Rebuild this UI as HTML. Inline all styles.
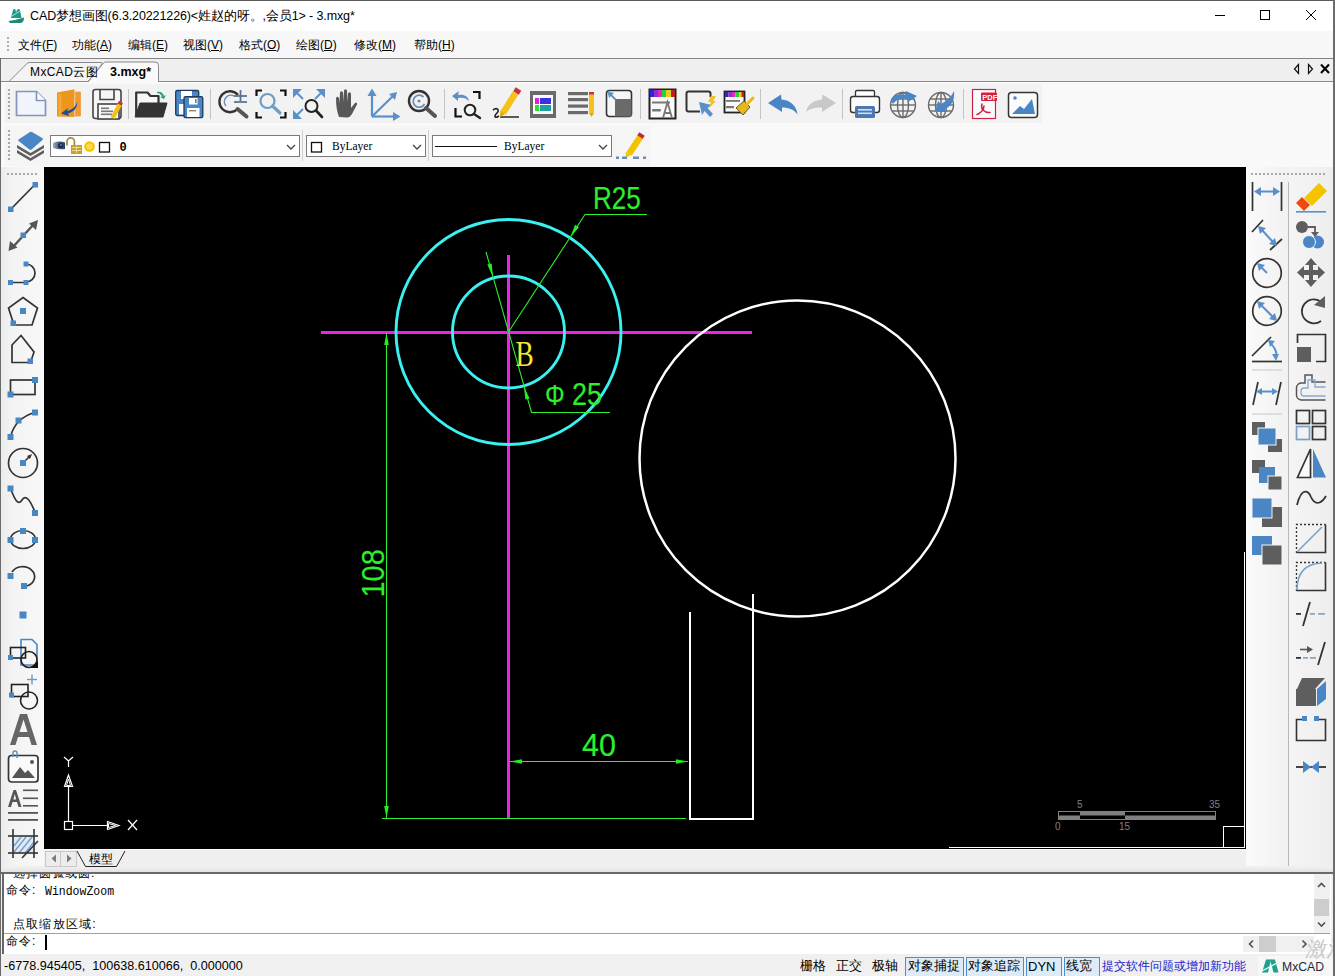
<!DOCTYPE html>
<html><head><meta charset="utf-8">
<style>
*{margin:0;padding:0;box-sizing:border-box}
html,body{width:1335px;height:976px;overflow:hidden;background:#f0f0f0;font-family:"Liberation Sans",sans-serif;color:#000}
.a{position:absolute}
.t{position:absolute;white-space:nowrap;line-height:1}
.menu{font-size:12px;top:39px}
.menu u{text-decoration:underline}
svg{position:absolute;overflow:visible}
</style></head><body>
<!-- title bar -->
<div class="a" style="left:0;top:0;width:1335px;height:31px;background:#fff;border-top:1px solid #5b5b5b"></div>
<div class="t" style="left:30px;top:10px;font-size:12.5px;letter-spacing:-0.11px;color:#000">CAD梦想画图(6.3.20221226)&lt;姓赵的呀。,会员1&gt; - 3.mxg*</div>
<!-- menu bar -->
<div class="a" style="left:0;top:31px;width:1335px;height:27px;background:#f7f7f7"></div>
<div class="t menu" style="left:18px">文件(<u>F</u>)</div>
<div class="t menu" style="left:72px">功能(<u>A</u>)</div>
<div class="t menu" style="left:128px">编辑(<u>E</u>)</div>
<div class="t menu" style="left:183px">视图(<u>V</u>)</div>
<div class="t menu" style="left:239px">格式(<u>O</u>)</div>
<div class="t menu" style="left:296px">绘图(<u>D</u>)</div>
<div class="t menu" style="left:354px">修改(<u>M</u>)</div>
<div class="t menu" style="left:414px">帮助(<u>H</u>)</div>
<!-- TOP -->
<svg class="a" style="left:0;top:0" width="1335" height="976" viewBox="0 0 1335 976">
<path d="M11,18 L13,10 Q14,8.5 15.5,9.5 L16,12 L17.5,9.5 Q19,8.5 20,10 L21.5,18 Z" fill="#1f9a86"/>
<line x1="12" y1="16" x2="20" y2="11" stroke="#8ff0e0" stroke-width="1"/>
<path d="M8.5,21 Q16,20 24,17.5 Q24,22 21,23 H10 Z" fill="#1f8a74"/>
<g stroke="#000" stroke-width="1" fill="none">
<line x1="1215" y1="15.5" x2="1225" y2="15.5"/>
<rect x="1260.5" y="10.5" width="9" height="9"/>
<line x1="1306" y1="10" x2="1316" y2="20"/><line x1="1316" y1="10" x2="1306" y2="20"/>
</g>
<g fill="#b0b0b0"><rect x="7" y="37" width="2" height="2"/><rect x="7" y="41" width="2" height="2"/><rect x="7" y="45" width="2" height="2"/><rect x="7" y="49" width="2" height="2"/></g>
</svg>
<!-- /TOP -->
<!-- tab bar -->
<div class="a" style="left:0;top:58px;width:1335px;height:24px;background:#efefef;border-top:1px solid #838383;border-bottom:1px solid #8a8a8a"></div>
<!-- TABS -->
<svg class="a" style="left:0;top:0" width="1335" height="976" viewBox="0 0 1335 976">
<path d="M9,81.5 L27,63.5 Q28,62.5 30,62.5 H101 Q103,62.5 102,64 L88,81.5 Z" fill="#f4f4f4" stroke="#8a8a8a" stroke-width="1"/>
<path d="M88,82 L103.5,63 Q104.5,62 106,62 H155 Q158.5,62 158.5,65.5 V82 Z" fill="#fafafa" stroke="#8a8a8a" stroke-width="1"/>
<rect x="89" y="81" width="69" height="2" fill="#fafafa"/>
<g fill="none" stroke="#111" stroke-width="1.2"><polygon points="1298.5,64.5 1294.5,69 1298.5,73.5"/><polygon points="1308.5,64.5 1312.5,69 1308.5,73.5"/></g>
<g stroke="#000" stroke-width="2"><line x1="1321" y1="64.5" x2="1329" y2="73"/><line x1="1329" y1="64.5" x2="1321" y2="73"/></g>
</svg>
<div class="t" style="left:30px;top:66px;font-size:12px;letter-spacing:0.4px">MxCAD云图</div>
<div class="t" style="left:110px;top:66px;font-size:12.5px;font-weight:bold">3.mxg*</div>
<!-- /TABS -->
<!-- toolbar area -->
<div class="a" style="left:1px;top:82px;width:1332px;height:85px;background:#f9f9f9"></div>
<div class="a" style="left:5px;top:84px;width:1037px;height:39px;background:#f2f2f2"></div>
<div class="a" style="left:5px;top:126px;width:646px;height:40px;background:#f5f5f5"></div>
<!-- ROW1 -->
<svg class="a" style="left:0;top:0" width="1335" height="976" viewBox="0 0 1335 976">
<!-- grip -->
<g fill="#a8a8a8"><rect x="8" y="89" width="2" height="2"/><rect x="8" y="93" width="2" height="2"/><rect x="8" y="97" width="2" height="2"/><rect x="8" y="101" width="2" height="2"/><rect x="8" y="105" width="2" height="2"/><rect x="8" y="109" width="2" height="2"/><rect x="8" y="113" width="2" height="2"/><rect x="8" y="117" width="2" height="2"/></g>
<!-- separators -->
<g fill="#c4c4c4"><rect x="128" y="89" width="1" height="30"/><rect x="210" y="89" width="1" height="30"/><rect x="444" y="89" width="1" height="30"/><rect x="640" y="89" width="1" height="30"/><rect x="760" y="89" width="1" height="30"/><rect x="842" y="89" width="1" height="30"/><rect x="963" y="89" width="1" height="30"/></g>
<!-- 1 new -->
<path d="M16.5,91.5 H36.5 L45.5,100.5 V115.5 H16.5 Z" fill="#f1f5fb" stroke="#8296bb" stroke-width="1.7"/>
<path d="M36.5,91.5 V100.5 H45.5" fill="#fff" stroke="#8296bb" stroke-width="1.7"/>
<!-- 2 open orange -->
<rect x="75.5" y="92" width="5" height="24" fill="#f29a30" stroke="#e8a040" stroke-width="0.8"/>
<polygon points="57,92.6 74.5,89.3 74.5,117 57,116.6" fill="#ec961e"/>
<rect x="58.5" y="94" width="3" height="22" fill="#f4a838"/>
<path d="M77,101 C77,106 72,110 67,111 L68,108 L61,113.5 L69,116 L68,113.5 C74,112 78,107 77,101 Z" fill="#1d4f9b"/>
<!-- 3 save -->
<rect x="93" y="89.5" width="28" height="29" rx="2.5" fill="#f6f6f6" stroke="#444" stroke-width="1.6"/>
<path d="M100,90 V99.5 H114 V90" fill="none" stroke="#444" stroke-width="1.6"/>
<rect x="98" y="104" width="21" height="15" fill="#f9f9f9" stroke="#444" stroke-width="1.6"/>
<g fill="#7a7a7a"><rect x="101" y="107.5" width="8" height="1.6"/><rect x="101" y="110.5" width="12" height="1.6"/><rect x="101" y="113.5" width="11" height="1.6"/></g>
<line x1="120" y1="104" x2="112.5" y2="118" stroke="#f2c21a" stroke-width="4.5"/>
<line x1="121" y1="102" x2="119.5" y2="104.5" stroke="#c8323c" stroke-width="4.5"/>
<!-- 4 folder -->
<path d="M136.2,116 V92.5 H147.5 L150.5,96 H158.5 V103" fill="#f7f7f7" stroke="#333" stroke-width="2.2" stroke-linejoin="round"/>
<polygon points="135,117 140,103 167,103 163,117" fill="#333" stroke="#333" stroke-width="1" stroke-linejoin="round"/>
<path d="M157,92 C161,91 163,93 164,96 L166,95 L164,99 L160,97 L162,96.5 C161,94 159,93 157,93 Z" fill="#2a9d8f"/>
<!-- 5 save as -->
<rect x="175.7" y="90.5" width="23" height="25" rx="1.5" fill="#4a86c5" stroke="#1e3a5a" stroke-width="1.3"/>
<rect x="181" y="91" width="11" height="8" fill="#fff"/>
<rect x="179" y="104" width="6" height="10.5" fill="#fff"/>
<rect x="184" y="96.7" width="18.8" height="21" rx="1.5" fill="#4a86c5" stroke="#1e3a5a" stroke-width="1.3"/>
<rect x="189" y="98" width="8.5" height="6.5" fill="#fff"/><rect x="195" y="99" width="1.5" height="4" fill="#777"/>
<rect x="187" y="108" width="12.5" height="9" fill="#fff"/>
<rect x="189" y="110" width="7" height="1.4" fill="#887"/>
<!-- 6 zoom realtime -->
<path d="M238,95 A10.5,10.5 0 1 0 237.5,109" fill="none" stroke="#333" stroke-width="2.4"/>
<path d="M234,96 A6.5,6.5 0 0 0 226,106" fill="none" stroke="#6a8fb8" stroke-width="1.6"/>
<line x1="237.5" y1="109" x2="246.5" y2="116.5" stroke="#555" stroke-width="4" stroke-linecap="round"/>
<g stroke="#5c7390" stroke-width="1.8"><line x1="234" y1="96" x2="247" y2="96"/><line x1="240.5" y1="90" x2="240.5" y2="101"/><line x1="234" y1="102" x2="247" y2="102"/></g>
<!-- 7 zoom window -->
<path d="M256.5,96 V90.5 H262 M280,90.5 H285.5 V96 M256.5,112 V117.5 H262 M280,117.5 H285.5 V112" fill="none" stroke="#111" stroke-width="2.2"/>
<circle cx="267.5" cy="101" r="7" fill="none" stroke="#6e9bc8" stroke-width="2.2"/>
<line x1="272.5" y1="106" x2="280" y2="113" stroke="#6e9bc8" stroke-width="3.2" stroke-linecap="round"/>
<!-- 8 zoom extents -->
<g fill="#5a90c8"><polygon points="293,89 302,89 293,98"/><polygon points="325,89 316,89 325,98"/><polygon points="293,119 302,119 293,110"/><polygon points="325,119 316,119 325,110" fill="none"/></g>
<g stroke="#5a90c8" stroke-width="2"><line x1="295" y1="91" x2="303" y2="99"/><line x1="323" y1="91" x2="315" y2="99"/><line x1="295" y1="117" x2="303" y2="109"/></g>
<circle cx="311.5" cy="106" r="6" fill="none" stroke="#222" stroke-width="2"/>
<line x1="316" y1="110.5" x2="322" y2="117" stroke="#222" stroke-width="2.6" stroke-linecap="round"/>
<!-- 9 hand -->
<path d="M339,117 C337,112 336,106 336,98 Q337.5,95.5 339,98 L339.5,103 L340,92.5 Q341.5,90 343,92.5 L343.5,102 L344,90.5 Q345.5,88 347,90.5 L347.5,102 L348,93.5 Q349.5,91 351,93.5 L351,108 L355,103 Q357.5,101.5 357,104.5 L352.5,113 C351,116 349,117.5 347,117.5 Z" fill="#585858"/>
<!-- 10 ucs -->
<g stroke="#5a90c8" stroke-width="2.2" fill="none"><line x1="372" y1="116.5" x2="372" y2="94"/><line x1="372" y1="116.5" x2="395" y2="116.5"/><line x1="372" y1="116.5" x2="393" y2="96"/></g>
<g fill="#5a90c8"><polygon points="372,88.5 367.5,96 376.5,96"/><polygon points="400.5,116.5 393,112 393,121"/><polygon points="397,92 389,94 395,100"/></g>
<!-- 11 zoom previous -->
<circle cx="419" cy="101" r="10" fill="none" stroke="#333" stroke-width="2.4"/>
<path d="M423.5,97 A6,6 0 1 0 424.5,104" fill="none" stroke="#6a8fb8" stroke-width="1.8"/>
<circle cx="419" cy="101" r="1.6" fill="#6a8fb8"/>
<line x1="426" y1="108" x2="435" y2="116" stroke="#555" stroke-width="4" stroke-linecap="round"/>
<!-- 12 zoom back -->
<path d="M469,101 C468,96 464,94 458,95 L459,91 L452,96 L458,101 L458,98 C463,97 466,98 469,101 Z" fill="#5a90c8"/>
<path d="M473,92 H479.5 V99 M455.5,108 V116.5 H462" fill="none" stroke="#111" stroke-width="2.2"/>
<circle cx="470" cy="110" r="5.3" fill="none" stroke="#222" stroke-width="2"/>
<line x1="474" y1="114" x2="480" y2="118" stroke="#222" stroke-width="2.4" stroke-linecap="round"/>
<!-- 13 pencil -->
<path d="M493,110 C497,107 500,110 497,113 C494,116 494,119 499,116" fill="none" stroke="#222" stroke-width="1.6"/>
<line x1="500" y1="117" x2="519" y2="117" stroke="#333" stroke-width="1.6"/>
<line x1="515.5" y1="93" x2="503" y2="113" stroke="#f4c21a" stroke-width="6.5"/>
<polygon points="500,117 500.5,111 505,114" fill="#e6a800"/>
<line x1="518.5" y1="89" x2="516" y2="93" stroke="#c8323c" stroke-width="6.5"/>
<!-- 14 layer table -->
<rect x="530" y="91" width="26" height="27" fill="#6a6a6a"/>
<rect x="533" y="95" width="20" height="19" fill="#fafafa"/>
<rect x="535" y="98" width="4" height="6" fill="#e020e0"/><rect x="540" y="98" width="11" height="6" fill="#3a30e0"/>
<rect x="535" y="105" width="4" height="6" fill="#30e030"/><rect x="540" y="105" width="11" height="6" fill="#20a0a0"/>
<!-- 15 lines pencil -->
<g fill="#6a6a6a"><rect x="568" y="92" width="20" height="3.2"/><rect x="568" y="98" width="20" height="3.2"/><rect x="568" y="104.5" width="20" height="3.2"/><rect x="568" y="111" width="20" height="3.2"/></g>
<rect x="589" y="94" width="5" height="19" fill="#f4c21a"/><rect x="589" y="92" width="5" height="2.5" fill="#c8323c"/><polygon points="589,113 594,113 591.5,117" fill="#e6a800"/>
<!-- 16 matchprop -->
<rect x="606.5" y="90.5" width="25" height="26" rx="3" fill="#f7f7f7" stroke="#333" stroke-width="1.6"/>
<rect x="615" y="99" width="16.5" height="17.5" fill="#6a6a6a"/>
<line x1="616" y1="100" x2="610" y2="94" stroke="#5a90c8" stroke-width="1.8"/>
<polygon points="607.5,91.5 614,93 609,98" fill="#5a90c8"/>
<!-- 17 text style -->
<rect x="649.5" y="89.5" width="26" height="29" fill="#fafafa" stroke="#222" stroke-width="2"/>
<g><rect x="650" y="90" width="4" height="7" fill="#2a2ad0"/><rect x="654" y="90" width="4" height="7" fill="#9a2ad0"/><rect x="658" y="90" width="4" height="7" fill="#e02ac0"/><rect x="662" y="90" width="4" height="7" fill="#30d030"/><rect x="666" y="90" width="5" height="7" fill="#e0d020"/><rect x="671" y="90" width="4" height="7" fill="#c02020"/></g>
<rect x="652" y="101.5" width="18" height="2" fill="#777"/>
<rect x="652" y="109" width="9" height="2.5" fill="#777" rx="1"/>
<path d="M663,118 L667.5,102 L672,118 M665,113 H670" fill="none" stroke="#777" stroke-width="1.8"/>
<!-- 18 select -->
<path d="M700,111.5 H688.5 A2,2 0 0 1 686.5,109.5 V93.5 A2,2 0 0 1 688.5,91.5 H708.5 A2,2 0 0 1 710.5,93.5 V97" fill="none" stroke="#333" stroke-width="2"/>
<polygon points="699,102 712,105 707.5,108 713,114 710,117 704.5,111 702,115" fill="#5a90c8"/>
<polygon points="711,96 716,96 713,101 716,101 709,108 711,102 708,102" fill="#f2c21a"/>
<!-- 19 brush style -->
<rect x="724.5" y="91.5" width="20" height="21" fill="#fafafa" stroke="#222" stroke-width="1.8"/>
<g><rect x="725" y="92" width="3.5" height="5" fill="#2a2ad0"/><rect x="728.5" y="92" width="3.5" height="5" fill="#9a2ad0"/><rect x="732" y="92" width="3.5" height="5" fill="#e02ac0"/><rect x="735.5" y="92" width="3.5" height="5" fill="#30d030"/><rect x="739" y="92" width="2.5" height="5" fill="#e0d020"/><rect x="741.5" y="92" width="2.5" height="5" fill="#c02020"/></g>
<rect x="726" y="100" width="14" height="1.8" fill="#777"/><rect x="726" y="106" width="8" height="2.2" fill="#777"/>
<path d="M736,108 L744,101 L750,107 L743,115 Z" fill="#e8b81a" stroke="#6a5a20" stroke-width="1"/>
<line x1="747" y1="104" x2="753" y2="98" stroke="#e8b81a" stroke-width="3" stroke-linecap="round"/>
<!-- 20 undo -->
<path d="M768,103 L781,94.5 L781.5,99.5 C790,100 797,106 797.5,114.5 C794,109.5 789,107.5 782,107.5 L782,112 Z" fill="#4a86c5"/>
<!-- 21 redo -->
<path d="M836,103 L822.5,94.5 L822,99.5 C814,100 807,105 806,112 C810,108.5 815,107.5 822,107.5 L822,112 Z" fill="#c8c8c8"/>
<!-- 22 printer -->
<rect x="855.5" y="90.5" width="19" height="7" rx="1.5" fill="#fff" stroke="#333" stroke-width="1.3"/>
<rect x="850.5" y="96.5" width="29" height="16" rx="2.5" fill="#fbfbfb" stroke="#333" stroke-width="1.4"/>
<rect x="855" y="106" width="20" height="12" rx="1.5" fill="#4a78b0"/>
<rect x="858" y="109" width="14" height="1.6" fill="#cfe0f5"/><rect x="858" y="112.5" width="14" height="1.6" fill="#cfe0f5"/>
<!-- 23 globe1 -->
<g fill="none" stroke="#6a6a6a" stroke-width="1.4"><circle cx="903" cy="105" r="12.5"/><ellipse cx="903" cy="105" rx="5.5" ry="12.5"/><line x1="890.5" y1="105" x2="915.5" y2="105"/><line x1="892" y1="99" x2="914" y2="99"/><line x1="892" y1="111" x2="914" y2="111"/><line x1="903" y1="92.5" x2="903" y2="117.5"/></g>
<path d="M891,101 C893,95 899,93 905,95 L906,91 L917,96 L908,102 L907,99 C902,98 896,99 893,104 Z" fill="#4a86c5"/>
<!-- 24 globe2 -->
<g fill="none" stroke="#6a6a6a" stroke-width="1.4"><circle cx="941" cy="105" r="12.5"/><ellipse cx="941" cy="105" rx="5.5" ry="12.5"/><line x1="928.5" y1="105" x2="953.5" y2="105"/><line x1="930" y1="99" x2="952" y2="99"/><line x1="930" y1="111" x2="952" y2="111"/><line x1="941" y1="92.5" x2="941" y2="117.5"/></g>
<path d="M954,91 C955,99 952,106 945,109 L947,112 L935,112 L938,101 L941,104 C947,101 951,97 954,91 Z" fill="#4a86c5"/>
<!-- 25 pdf -->
<rect x="972.5" y="89.5" width="23" height="29" fill="#fbfbfb" stroke="#cc2244" stroke-width="1.2"/>
<rect x="981" y="92.5" width="16" height="8.5" rx="1" fill="#d4203e"/>
<text x="982.3" y="100" font-family="Liberation Sans" font-size="7.5" font-weight="bold" fill="#fff">PDF</text>
<path d="M982,104 C981,107 982,109 983,110 C981,112 979,114 977,114.5 M983,110 C985,112 987,113 990,112.5 M983,110 L984,106" fill="none" stroke="#cc2244" stroke-width="1.5" stroke-linecap="round"/>
<!-- 26 image -->
<rect x="1008.5" y="92.5" width="29" height="25" rx="3" fill="#fbfbfb" stroke="#333" stroke-width="1.5"/>
<circle cx="1015" cy="98" r="1.8" fill="#4a86c5"/>
<polygon points="1012,114 1020,106 1024,109 1032,99 1035,114" fill="#4a86c5"/>
</svg>
<!-- /ROW1 -->
<!-- ROW2 -->
<svg class="a" style="left:0;top:0" width="1335" height="976" viewBox="0 0 1335 976">
<g fill="#a8a8a8"><rect x="8" y="130" width="2" height="2"/><rect x="8" y="134" width="2" height="2"/><rect x="8" y="138" width="2" height="2"/><rect x="8" y="142" width="2" height="2"/><rect x="8" y="146" width="2" height="2"/><rect x="8" y="150" width="2" height="2"/><rect x="8" y="154" width="2" height="2"/><rect x="8" y="158" width="2" height="2"/></g>
<!-- layers icon -->
<path d="M17,150 L30.5,158 L44,150 L44,153 L30.5,161 L17,153 Z" fill="#5e5e5e"/>
<path d="M17,145 L30.5,153 L44,145 L44,148 L30.5,156 L17,148 Z" fill="#5e5e5e"/>
<path d="M18,141 Q17,140 18.5,139 L30,131.5 Q31,131 32,131.5 L43,138 Q44,139 43,140 L31.5,150 Q30.5,150.5 29.5,150 Z" fill="#4a86c5" stroke="#f3f3f3" stroke-width="1"/>
<!-- combo boxes -->
<rect x="50.5" y="135.5" width="249" height="21" fill="#fff" stroke="#7a7a7a" stroke-width="1"/>
<rect x="306.5" y="135.5" width="119" height="21" fill="#fff" stroke="#7a7a7a" stroke-width="1"/>
<rect x="432.5" y="135.5" width="179" height="21" fill="#fff" stroke="#7a7a7a" stroke-width="1"/>
<g fill="#d0d0d0"><rect x="302" y="130" width="1" height="31"/><rect x="428" y="130" width="1" height="31"/></g>
<g fill="none" stroke="#444" stroke-width="1.3"><polyline points="287,145 291,149 295,145"/><polyline points="413,145 417,149 421,145"/><polyline points="599,145 603,149 607,145"/></g>
<!-- eye -->
<defs><linearGradient id="eyeg" x1="0" x2="1"><stop offset="0" stop-color="#9aaabb"/><stop offset="0.5" stop-color="#4a6282"/><stop offset="1" stop-color="#2a4262"/></linearGradient></defs><path d="M53,143 Q59,140.5 65,142.5 V149 Q59,150 53,148 Z" fill="url(#eyeg)"/><circle cx="60.5" cy="145.5" r="2.6" fill="#1a2e4a"/><circle cx="61" cy="145" r="0.7" fill="#c8d4e0"/>
<!-- lock -->
<path d="M67,145.5 V141.5 A3.7,3.7 0 0 1 74.4,141.5 V146" fill="none" stroke="#a89040" stroke-width="1.8"/>
<rect x="71" y="145" width="11" height="9" fill="#c8a030"/>
<g fill="#f0d890"><rect x="72" y="147" width="9" height="1"/><rect x="72" y="150" width="9" height="1"/><rect x="76" y="146" width="1" height="7"/></g>
<!-- sun -->
<circle cx="89.5" cy="146.5" r="5.3" fill="#f5c000"/><circle cx="89.5" cy="146.5" r="3.2" fill="#ffd84a"/>
<!-- squares -->
<rect x="99.5" y="142.5" width="10" height="9.5" fill="none" stroke="#111" stroke-width="1.3"/>
<rect x="311.5" y="142.5" width="10" height="9.5" fill="none" stroke="#111" stroke-width="1.3"/>
<line x1="435" y1="146.5" x2="497" y2="146.5" stroke="#111" stroke-width="1"/>
<!-- pencil -->
<line x1="640.5" y1="136.5" x2="629" y2="154" stroke="#f2c400" stroke-width="6.5"/>
<line x1="642" y1="134" x2="640" y2="137" stroke="#c02838" stroke-width="6.5"/>
<polygon points="626,157.5 625.5,152 631,155" fill="#f2c400"/>
<g fill="#6a8cb8"><rect x="616" y="156.5" width="3" height="2.5"/><rect x="622" y="156.5" width="5" height="2.5"/><rect x="633" y="156.5" width="6" height="2.5"/><rect x="643" y="156.5" width="3" height="2.5"/></g>
</svg>
<div class="t" style="left:119.5px;top:141.5px;font-family:'Liberation Mono',monospace;font-size:12px;font-weight:bold">0</div>
<div class="t" style="left:332px;top:141px;font-family:'Liberation Serif',serif;font-size:11.5px">ByLayer</div>
<div class="t" style="left:504px;top:141px;font-family:'Liberation Serif',serif;font-size:11.5px">ByLayer</div>
<!-- /ROW2 -->
<!-- drawing area -->
<div class="a" style="left:44px;top:167px;width:1202px;height:682px;background:#000"></div>
<!-- drawing -->
<svg class="a" style="left:0;top:0" width="1335" height="976" viewBox="0 0 1335 976">
<g fill="none">
<line x1="321" y1="332.5" x2="752" y2="332.5" stroke="#ea22ea" stroke-width="3"/>
<line x1="508.5" y1="255" x2="508.5" y2="819" stroke="#ea22ea" stroke-width="3"/>
<circle cx="508.5" cy="332" r="112.5" stroke="#3af0f0" stroke-width="2.9"/>
<circle cx="508.5" cy="332" r="56" stroke="#3af0f0" stroke-width="2.9"/>
<circle cx="797.5" cy="458.5" r="158" stroke="#fff" stroke-width="2.5"/>
<polyline points="690,612 690,819 753,819 753,594" stroke="#fff" stroke-width="2"/>
<g stroke="#2cf02c" stroke-width="1.1">
<polyline points="508.5,332 585,214.5 647,214.5"/>
<polyline points="486,252 531.5,412.5 610,412.5"/>
<line x1="386.5" y1="333" x2="386.5" y2="818.5"/>
<line x1="382" y1="818.5" x2="686" y2="818.5"/>
<line x1="510" y1="761.5" x2="688" y2="761.5"/>
</g>
</g>
<polygon points="570.5,237.0 575.0,224.8 579.0,227.2" fill="#22ee22"/><polygon points="493.0,277.0 487.3,264.6 491.7,263.4" fill="#22ee22"/><polygon points="524.0,387.0 529.7,398.4 525.3,399.6" fill="#22ee22"/><polygon points="510.0,761.5 522.0,759.2 522.0,763.8" fill="#22ee22"/><polygon points="688.0,761.5 676.0,763.8 676.0,759.2" fill="#22ee22"/><polygon points="386.5,333.0 388.8,345.0 384.2,345.0" fill="#22ee22"/><polygon points="386.5,818.0 384.2,806.0 388.8,806.0" fill="#22ee22"/>
<g fill="#2cf02c" font-family="Liberation Sans" >
<text x="593" y="208.6" font-size="31" transform="translate(593 0) scale(0.84 1) translate(-593 0)" stroke="#2cf02c" stroke-width="0.15">R25</text>
<text x="545" y="405.5" font-size="30" transform="translate(545 0) scale(0.82 1) translate(-545 0)" stroke="#2cf02c" stroke-width="0.15">&#934;</text>
<text x="572" y="405.5" font-size="30.5" transform="translate(572 0) scale(0.88 1) translate(-572 0)" stroke="#2cf02c" stroke-width="0.15">25</text>
<text x="582" y="755.5" font-size="30.5" stroke="#2cf02c" stroke-width="0.15">40</text>
<text x="0" y="0" font-size="31.5" transform="translate(383.5 597.5) rotate(-90) scale(0.92 1)" stroke="#2cf02c" stroke-width="0.15">108</text>
</g>
<text x="515.5" y="365.7" font-size="35" fill="#f0e830" font-family="Liberation Serif" transform="translate(515.5 0) scale(0.78 1) translate(-515.5 0)">B</text>
<!-- ucs -->
<g stroke="#fff" stroke-width="1.2" fill="none">
<rect x="64.5" y="821.5" width="8" height="8"/>
<line x1="68.5" y1="821.5" x2="68.5" y2="786.5"/>
<line x1="72.5" y1="825.5" x2="107.5" y2="825.5"/>
<polygon points="68.5,775 64.5,786.5 72.5,786.5"/>
<polygon points="119,825.5 107.5,821.5 107.5,829.5"/>
<polygon points="68.5,779 66.5,785.5 70.5,785.5" stroke-width="1"/><polygon points="115.5,825.5 108.5,823.5 108.5,827.5" stroke-width="1"/>
<polyline points="64,757 68.5,761 73,757"/><line x1="68.5" y1="761" x2="68.5" y2="767"/>
<line x1="128" y1="820" x2="137" y2="830"/><line x1="137" y1="820" x2="128" y2="830"/>
</g>
<!-- scale bar -->
<g>
<rect x="1058.5" y="811.5" width="157" height="8" fill="none" stroke="#808080" stroke-width="1"/>
<rect x="1058" y="815.5" width="22" height="4.5" fill="#808080"/>
<rect x="1080" y="811.5" width="45" height="4" fill="#808080"/>
<rect x="1125" y="815.5" width="91" height="4.5" fill="#808080"/>
<g fill="#808080" font-family="Liberation Sans" font-size="10">
<text x="1077" y="808">5</text><text x="1209" y="808">35</text>
<text x="1055" y="830">0</text><text x="1119" y="830">15</text>
</g>
<polyline points="949,847.5 1244.5,847.5 1244.5,552" fill="none" stroke="#fff" stroke-width="1"/>
<rect x="1223.5" y="826.5" width="21" height="21" fill="none" stroke="#fff" stroke-width="1"/>
</g>
</svg>
<!-- left toolbar -->
<div class="a" style="left:1px;top:167px;width:43px;height:701px;background:linear-gradient(to right,#ececec 0,#f3f3f3 25%,#f8f8f8 100%)"></div>
<!-- right toolbar -->
<div class="a" style="left:1246px;top:167px;width:87px;height:701px;background:linear-gradient(to right,#fafafa 0,#f1f1f1 49%,#f4f4f4 50%,#eeeeee 100%)"></div>
<!-- LEFT -->
<svg class="a" style="left:0;top:0" width="1335" height="976" viewBox="0 0 1335 976">
<g fill="#a8a8a8"><rect x="7" y="173" width="2" height="2"/><rect x="11" y="173" width="2" height="2"/><rect x="15" y="173" width="2" height="2"/><rect x="19" y="173" width="2" height="2"/><rect x="23" y="173" width="2" height="2"/><rect x="27" y="173" width="2" height="2"/><rect x="31" y="173" width="2" height="2"/><rect x="35" y="173" width="2" height="2"/></g>
<g fill="none" stroke="#333" stroke-width="1.7">
<line x1="11" y1="209" x2="35" y2="184.5"/>
<path d="M10.5,282.5 H26 M26,264 A9,9 0 0 1 26,282"/>
<polygon points="23,297.5 37.5,308 32,325 14,325 8.5,308"/>
<polygon points="21,335.5 34,352 30.5,362.5 12,362.5 12,345"/>
<rect x="10.5" y="380" width="24.5" height="14.5"/>
<path d="M10.5,437 Q15,418 35,412.5"/>
<circle cx="23" cy="463" r="14.5"/>
<path d="M10.5,488.5 C15,500 18,506 22,500 C26,494 30,500 35,512"/>
<ellipse cx="23" cy="539.5" rx="12.5" ry="9"/>
<path d="M12,572 A12,10 0 1 1 27,586"/>
</g>
<g stroke="#555" stroke-width="2.4" fill="none"><line x1="12" y1="248" x2="34" y2="224"/></g>
<g fill="#555"><polygon points="8.5,251 10,241 17.5,247.5"/><polygon points="38,220 36,230 29,223.5"/></g>
<line x1="23" y1="463" x2="30" y2="456" stroke="#333" stroke-width="1.6"/><polygon points="32,454 27,456 30,459" fill="#333"/>
<g fill="#4a86c5">
<rect x="8" y="206.5" width="5.5" height="5.5"/><rect x="32.5" y="182" width="5.5" height="5.5"/>
<rect x="20.5" y="232.5" width="5.5" height="5.5"/>
<rect x="8" y="280" width="5" height="5"/><rect x="23.5" y="280" width="5" height="5"/><rect x="23.5" y="261.5" width="5" height="5"/>
<rect x="20" y="308" width="6" height="6"/><rect x="10.5" y="320.5" width="5.5" height="5.5"/>
<rect x="27.5" y="358.5" width="5.5" height="5.5"/>
<rect x="32" y="377" width="6" height="6"/><rect x="7.5" y="391.5" width="6" height="6"/>
<rect x="7.5" y="434" width="6" height="6"/><rect x="15.5" y="417.5" width="6" height="6"/><rect x="32" y="409.5" width="6" height="6"/>
<rect x="20" y="460" width="6" height="6"/>
<rect x="7.5" y="485.5" width="6" height="6"/><rect x="32" y="510" width="6" height="6"/>
<rect x="7.5" y="537" width="6" height="6"/><rect x="20" y="528" width="6" height="6"/><rect x="32" y="537" width="6" height="6"/>
<rect x="7.5" y="573" width="6" height="6"/><rect x="21" y="583" width="6" height="6"/>
<rect x="19.5" y="611.5" width="7" height="7"/>
</g>
<!-- block insert -->
<path d="M21,639.5 H32 L37,644.5 V665 H21 Z" fill="#f6f6f6" stroke="#4a86c5" stroke-width="1.6"/>
<g fill="none" stroke="#222" stroke-width="1.6"><rect x="10.5" y="647.5" width="15" height="10.5"/><circle cx="29" cy="659.5" r="8"/></g>
<polygon points="38,661 38,668 31,668" fill="#111"/>
<rect x="8" y="655" width="5" height="5" fill="#4a86c5"/>
<!-- make block -->
<g fill="none" stroke="#222" stroke-width="1.6"><rect x="11.5" y="684.5" width="16.5" height="12"/><circle cx="29" cy="700.5" r="8.5"/></g>
<rect x="9" y="692.5" width="5" height="5" fill="#4a86c5"/>
<g stroke="#6a9ac8" stroke-width="1.4"><line x1="27" y1="679.5" x2="37" y2="679.5"/><line x1="32" y1="674.5" x2="32" y2="684.5"/></g>
<!-- text A -->
<path d="M10,745 L20,714 H27 L37,745 H31.5 L29,737 H18 L15.5,745 Z M19.5,732 H27.5 L23.5,719.5 Z" fill="#666" fill-rule="evenodd"/>
<!-- image -->
<rect x="8.5" y="755.5" width="29.5" height="26.5" rx="3" fill="#fafafa" stroke="#333" stroke-width="1.7"/>
<path d="M13,757 V753 A2,2 0 0 1 17,753 V758" fill="none" stroke="#5a90c8" stroke-width="1.4"/>
<circle cx="32" cy="762" r="2" fill="#555"/>
<polygon points="12,778 20,767 25,773 28,770 35,778" fill="#555"/>
<!-- mtext -->
<path d="M8,807 L13.5,790 H16 L21.5,807 H18.5 L17,802 H12.5 L11,807 Z M13.3,799.5 H16.2 L14.8,794 Z" fill="#555" fill-rule="evenodd"/>
<g fill="#555"><rect x="23" y="789.5" width="15" height="1.6"/><rect x="23" y="797.5" width="15" height="1.6"/><rect x="23" y="805" width="15" height="1.6"/><rect x="8" y="812" width="30" height="1.8"/><rect x="8" y="819" width="30" height="1.8"/></g>
<!-- hatch -->
<rect x="13" y="836" width="21" height="17" fill="#dfeaf5"/>
<g stroke="#7aa0c8" stroke-width="1.5"><line x1="14" y1="846" x2="21" y2="837"/><line x1="14" y1="852" x2="26" y2="837"/><line x1="19" y1="853" x2="32" y2="837"/><line x1="25" y1="853" x2="34" y2="842"/></g>
<g stroke="#333" stroke-width="1.6"><line x1="8" y1="836" x2="38" y2="836"/><line x1="8" y1="853" x2="38" y2="853"/><line x1="13" y1="829" x2="13" y2="858"/><line x1="34" y1="829" x2="34" y2="858"/><line x1="22" y1="858" x2="38" y2="841"/></g>
</svg>
<!-- /LEFT -->
<!-- RIGHT -->
<svg class="a" style="left:0;top:0" width="1335" height="976" viewBox="0 0 1335 976">
<g fill="#a8a8a8"><rect x="1251" y="173" width="2" height="2"/><rect x="1255" y="173" width="2" height="2"/><rect x="1259" y="173" width="2" height="2"/><rect x="1263" y="173" width="2" height="2"/><rect x="1267" y="173" width="2" height="2"/><rect x="1271" y="173" width="2" height="2"/><rect x="1275" y="173" width="2" height="2"/><rect x="1279" y="173" width="2" height="2"/><rect x="1283" y="173" width="2" height="2"/><rect x="1287" y="173" width="2" height="2"/><rect x="1291" y="173" width="2" height="2"/><rect x="1295" y="173" width="2" height="2"/><rect x="1299" y="173" width="2" height="2"/><rect x="1303" y="173" width="2" height="2"/><rect x="1307" y="173" width="2" height="2"/><rect x="1311" y="173" width="2" height="2"/><rect x="1315" y="173" width="2" height="2"/><rect x="1319" y="173" width="2" height="2"/><rect x="1323" y="173" width="2" height="2"/></g>
<rect x="1288" y="182" width="1" height="686" fill="#b8b8b8"/>
<g fill="#c8c8c8"><rect x="1252" y="369.5" width="30" height="1"/><rect x="1252" y="413.5" width="30" height="1"/></g>
<!-- col1 -->
<g fill="none" stroke="#333" stroke-width="1.7">
<line x1="1252.5" y1="182" x2="1252.5" y2="211"/><line x1="1281.5" y1="182" x2="1281.5" y2="211"/>
<line x1="1252" y1="232" x2="1263" y2="220"/><line x1="1270" y1="250" x2="1282" y2="239"/>
<circle cx="1267" cy="273" r="14.3"/>
<circle cx="1267" cy="311" r="14.3"/>
<line x1="1252" y1="356" x2="1271" y2="337"/><line x1="1252" y1="361.5" x2="1282" y2="361.5"/>
<line x1="1253" y1="405" x2="1258" y2="382"/><line x1="1276" y1="405" x2="1281" y2="382"/>
</g>
<g stroke="#5a90c8" stroke-width="2" fill="none">
<line x1="1258" y1="191.5" x2="1276" y2="191.5"/>
<line x1="1262" y1="230" x2="1273" y2="242"/>
<line x1="1267" y1="273" x2="1261" y2="267"/>
<line x1="1261" y1="305" x2="1273" y2="317"/>
<path d="M1270,343 Q1278,350 1276,358"/>
<line x1="1260" y1="391.5" x2="1274" y2="391.5"/>
</g>
<g fill="#5a90c8">
<polygon points="1254,191.5 1261,187 1261,196"/><polygon points="1280,191.5 1273,187 1273,196"/>
<polygon points="1258,226 1266,228 1260,234"/><polygon points="1277,246 1269,244 1275,238"/>
<polygon points="1257,263 1265,265 1259,271"/>
<polygon points="1257,301 1265,303 1259,309"/><polygon points="1277,321 1269,319 1275,313"/>
<polygon points="1268,340 1275,341 1270,347"/><polygon points="1276,361 1272,354 1279,354"/>
<polygon points="1256,391.5 1262,388 1262,395"/><polygon points="1278,391.5 1272,388 1272,395"/>
</g>
<rect x="1252" y="422" width="13" height="13" fill="#5e5e5e"/><rect x="1268" y="439" width="14" height="13" fill="#5e5e5e"/><rect x="1258" y="428" width="18" height="17" fill="#4a86c5" stroke="#f4f4f4" stroke-width="1"/>
<rect x="1252" y="460" width="13" height="13" fill="#5e5e5e"/><rect x="1259" y="467" width="16" height="16" fill="#4a86c5"/><rect x="1268" y="476" width="14" height="14" fill="#5e5e5e" stroke="#f4f4f4" stroke-width="1"/>
<rect x="1262" y="507" width="20" height="20" fill="#5e5e5e"/><rect x="1252" y="498" width="20" height="20" fill="#4a86c5" stroke="#f4f4f4" stroke-width="1"/>
<rect x="1252" y="536" width="20" height="19" fill="#4a86c5"/><rect x="1262" y="545" width="20" height="20" fill="#5e5e5e" stroke="#f4f4f4" stroke-width="1"/>
<!-- col2 -->
<rect x="1296" y="211" width="30" height="1.6" fill="#5a90c8"/>
<polygon points="1304,198 1319,183 1327,191 1312,206" fill="#f5c400"/>
<polygon points="1296,203 1302,197 1310,205 1304,211" fill="#f04a10"/>
<circle cx="1302" cy="227" r="6" fill="#5e5e5e"/>
<path d="M1308,227 H1315 V233" fill="none" stroke="#5e5e5e" stroke-width="1.8"/><polygon points="1311,232 1319,232 1315,237" fill="#5e5e5e"/>
<circle cx="1317.5" cy="242" r="6.5" fill="#4a86c5"/><circle cx="1309" cy="242" r="6.5" fill="#4a86c5" stroke="#f4f4f4" stroke-width="1"/>
<path d="M1311,258 L1317,265 H1313 V270 H1318 V266 L1325,272.5 L1318,279 V275 H1313 V280 H1317 L1311,287 L1305,280 H1309 V275 H1304 V279 L1297,272.5 L1304,266 V270 H1309 V265 H1305 Z" fill="#5e5e5e"/>
<path d="M1320,301 A12,12 0 1 0 1321,321" fill="none" stroke="#333" stroke-width="1.7"/>
<polygon points="1325,296 1325,308 1314,305" fill="#5e5e5e"/>
<path d="M1297.5,343 V334.5 H1325.5 V361.5 H1316" fill="none" stroke="#333" stroke-width="1.7"/>
<rect x="1297" y="347" width="14" height="15" fill="#5e5e5e"/>
<path d="M1325.5,382 H1312 V375 H1305 V383 H1301 A5,5 0 0 0 1296.5,388 V395 A5,5 0 0 0 1301,400 H1325.5" fill="none" stroke="#555" stroke-width="1.5"/>
<path d="M1325.5,387 H1315 V380 H1308 V388 H1304 A3,3 0 0 0 1301,391 V393 A3,3 0 0 0 1304,396 H1325.5" fill="none" stroke="#8aa8c8" stroke-width="1.3"/>
<g fill="none" stroke="#333" stroke-width="1.7"><rect x="1296.5" y="410.5" width="13" height="13"/><rect x="1312.5" y="410.5" width="13" height="13"/><rect x="1312.5" y="426.5" width="13" height="13"/></g>
<rect x="1296.5" y="426.5" width="13" height="13" fill="none" stroke="#7aa0c8" stroke-width="1.7"/>
<polygon points="1310.5,449 1310.5,477.5 1297.5,477.5" fill="#fafafa" stroke="#333" stroke-width="1.7"/>
<polygon points="1313,449 1326,477.5 1313,477.5" fill="#4a86c5"/>
<path d="M1297,505 C1302,485 1309,492 1311,497 C1314,504 1320,506 1326,496" fill="none" stroke="#333" stroke-width="1.8" stroke-dasharray="30 0"/>
<path d="M1296.5,553 V524.5 H1325.5" fill="none" stroke="#333" stroke-width="1.3" stroke-dasharray="2 2"/>
<path d="M1325.5,524.5 V552.5 H1296.5" fill="none" stroke="#333" stroke-width="1.6"/>
<line x1="1297" y1="552" x2="1322" y2="527" stroke="#7aa0c8" stroke-width="1.6"/>
<path d="M1296.5,591 V562.5 H1325.5" fill="none" stroke="#333" stroke-width="1.3" stroke-dasharray="2 2"/>
<path d="M1325.5,562.5 V590.5 H1296.5" fill="none" stroke="#333" stroke-width="1.6"/>
<path d="M1297,590 Q1297,564 1322,563" fill="none" stroke="#7aa0c8" stroke-width="1.6"/>
<line x1="1310" y1="602" x2="1303" y2="626" stroke="#333" stroke-width="1.8"/>
<rect x="1296" y="613" width="5" height="1.8" fill="#333"/>
<g fill="#8aa8c8"><rect x="1310" y="613" width="5" height="1.8"/><rect x="1318" y="613" width="7" height="1.8"/></g>
<line x1="1300" y1="649.5" x2="1311" y2="649.5" stroke="#555" stroke-width="1.6"/><polygon points="1313,649.5 1307,646 1307,653" fill="#555"/>
<rect x="1296" y="657" width="5" height="1.8" fill="#333"/><g fill="#8aa8c8"><rect x="1303" y="657" width="5" height="1.8"/><rect x="1310" y="657" width="6" height="1.8"/></g>
<line x1="1325" y1="642" x2="1318" y2="665" stroke="#333" stroke-width="1.8"/>
<polygon points="1297,689 1302,678 1325,678 1315,689" fill="#5e5e5e"/>
<rect x="1296" y="689" width="20" height="17" fill="#5e5e5e"/>
<polygon points="1317,689 1326,681 1326,699 1317,706" fill="#4a86c5"/>
<path d="M1303,719.5 H1296.5 V740.5 H1325.5 V719.5 H1319" fill="none" stroke="#333" stroke-width="1.6"/>
<g fill="#4a86c5"><rect x="1302" y="716" width="5" height="5"/><rect x="1314" y="716" width="5" height="5"/></g>
<line x1="1296" y1="767" x2="1326" y2="767" stroke="#333" stroke-width="1.8"/>
<polygon points="1311,767 1303,761 1303,773" fill="#4a86c5"/><polygon points="1311,767 1319,761 1319,773" fill="#4a86c5"/>
</svg>
<!-- /RIGHT -->
<!-- model tab bar -->
<div class="a" style="left:44px;top:849px;width:1202px;height:18px;background:#efefef"></div>
<div class="a" style="left:44px;top:849px;width:1202px;height:1px;background:#fafafa"></div>
<div class="a" style="left:1px;top:866px;width:1332px;height:8px;background:linear-gradient(#f2f2f2,#e2e2e2);border-bottom:2px solid #6a6a6a"></div>
<!-- command area -->
<div class="a" style="left:2px;top:874px;width:1329px;height:80px;background:#fff;border-left:2px solid #666"></div>
<!-- status bar -->
<div class="a" style="left:0;top:954px;width:1335px;height:22px;background:#f0f0f0"></div>
<!-- BOTTOM -->
<svg class="a" style="left:0;top:0" width="1335" height="976" viewBox="0 0 1335 976">
<!-- model tab bar -->
<rect x="45.5" y="851.5" width="31" height="15" fill="#ececec" stroke="#c8c8c8" stroke-width="1"/>
<line x1="60.5" y1="852" x2="60.5" y2="866" stroke="#c8c8c8" stroke-width="1"/>
<polygon points="56,854.5 56,862.5 51.5,858.5" fill="#7a7a7a"/>
<polygon points="67,854.5 67,862.5 71.5,858.5" fill="#7a7a7a"/>
<polyline points="77,851 85.5,866.5 116.5,866.5 125,851" fill="none" stroke="#222" stroke-width="1"/>
<!-- cmd separators -->
<rect x="4" y="933" width="1326" height="1" fill="#a0a0a0"/>
<rect x="45" y="935" width="2" height="15" fill="#000"/>
<!-- v scrollbar -->
<rect x="1314" y="874" width="16" height="59" fill="#f0f0f0"/>
<rect x="1314" y="899" width="15" height="17" fill="#cdcdcd"/>
<polyline points="1318,887 1321.5,883.5 1325,887" fill="none" stroke="#505050" stroke-width="1.6"/>
<polyline points="1318,922.5 1321.5,926 1325,922.5" fill="none" stroke="#505050" stroke-width="1.6"/>
<!-- h scrollbar -->
<rect x="1243" y="936" width="71" height="16" fill="#f0f0f0"/>
<rect x="1259" y="936" width="17" height="16" fill="#cdcdcd"/>
<polyline points="1253,940.5 1249.5,944 1253,947.5" fill="none" stroke="#505050" stroke-width="1.6"/>
<polyline points="1302.5,940.5 1306,944 1302.5,947.5" fill="none" stroke="#505050" stroke-width="1.6"/>
<!-- status buttons -->
<g fill="#dcebf7" stroke="#4a90d0" stroke-width="1">
<rect x="905.5" y="957.5" width="58" height="19"/>
<rect x="966.5" y="957.5" width="57" height="19"/>
<rect x="1026.5" y="957.5" width="35" height="19"/>
<rect x="1064.5" y="957.5" width="35" height="19"/>
</g>
<rect x="1258" y="956" width="75" height="20" fill="#f7f7f7"/>
</svg>
<div class="t" style="left:89px;top:853px;font-size:12px">模型</div>
<div class="a" style="left:4px;top:874px;width:1310px;height:59px;overflow:hidden">
<div class="t" style="left:9px;top:-7px;font-size:12px;letter-spacing:1px">选择圆弧或圆:</div>
</div>
<div class="t" style="left:6px;top:884px;font-size:12px;letter-spacing:1px">命令:</div>
<div class="t" style="left:45px;top:885px;font-family:'Liberation Mono',monospace;font-size:13px;transform:scaleX(0.885);transform-origin:0 0">WindowZoom</div>
<div class="t" style="left:13px;top:918px;font-size:12px;letter-spacing:1.2px">点取缩放区域:</div>
<div class="t" style="left:6px;top:935px;font-size:12px;letter-spacing:1px">命令:</div>
<div class="t" style="left:4px;top:960px;font-size:12.6px">-6778.945405,&nbsp; 100638.610066,&nbsp; 0.000000</div>
<div class="t" style="left:800px;top:960px;font-size:12.5px">栅格</div>
<div class="t" style="left:836px;top:960px;font-size:12.5px">正交</div>
<div class="t" style="left:872px;top:960px;font-size:12.5px">极轴</div>
<div class="t" style="left:908px;top:960px;font-size:12.5px">对象捕捉</div>
<div class="t" style="left:968px;top:960px;font-size:12.5px">对象追踪</div>
<div class="t" style="left:1028px;top:960px;font-size:13px">DYN</div>
<div class="t" style="left:1066px;top:960px;font-size:12.5px">线宽</div>
<div class="t" style="left:1102px;top:960px;font-size:12px;color:#2222cc">提交软件问题或增加新功能</div>
<div class="t" style="left:1282px;top:961px;font-size:12.2px;color:#1f2a3a">MxCAD</div>
<svg class="a" style="left:0;top:0" width="1335" height="976" viewBox="0 0 1335 976">
<polygon points="1262,972.5 1266,959.5 1271,959.5 1268,972.5" fill="#1fa08c"/>
<polygon points="1270,959.5 1275,959.5 1278.5,972.5 1273.5,972.5" fill="#1fa08c"/>
<line x1="1262" y1="971" x2="1279" y2="962" stroke="#e8fff8" stroke-width="1.2"/>
</svg>
<div class="t" style="left:1305px;top:938px;font-size:21px;color:#c8c8c8;font-style:italic">激活</div>
<!-- /BOTTOM -->
<!-- window borders -->
<div class="a" style="left:0;top:58px;width:1px;height:918px;background:#6a6a6a"></div>
<div class="a" style="left:1333px;top:0;width:2px;height:976px;background:#6c6c6c"></div>
</body></html>
